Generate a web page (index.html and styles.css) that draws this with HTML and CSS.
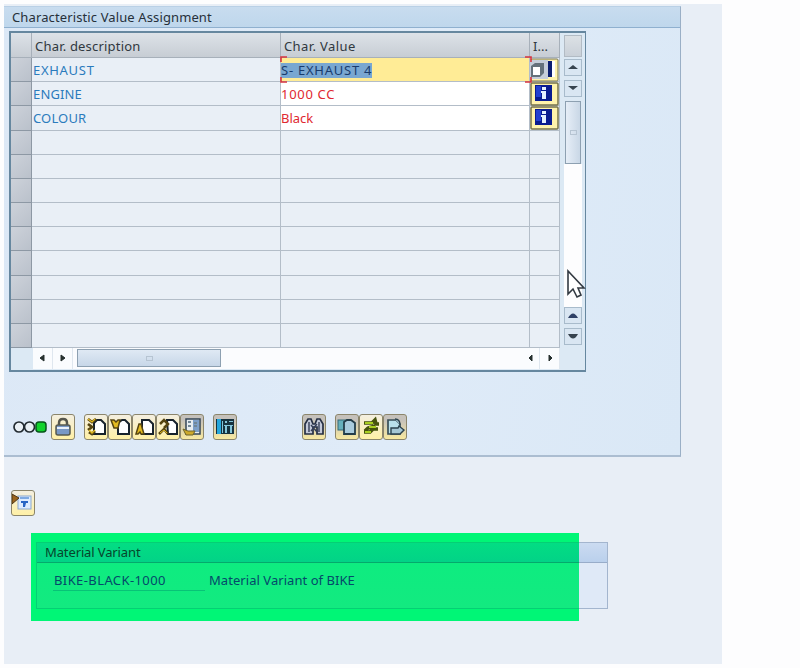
FILE: index.html
```html
<!DOCTYPE html>
<html lang="en">
<head>
    <meta charset="UTF-8">
    <title>Characteristic Value Assignment</title>
    <link rel="stylesheet" href="styles.css">
</head>
<body>

<div class="screen">
    <div class="panel">
        <div class="panel-title"><span class="t-title">Characteristic Value Assignment</span></div>

        <div class="table-box">
            <div class="table-main">
                <div class="grid">
                    <div class="row head">
                        <div class="sel"></div>
                        <div class="desc"><span class="t-desc">Char. description</span></div>
                        <div class="value"><span class="t-value">Char. Value</span></div>
                        <div class="info">I...</div>
                    </div>
                    <div class="rows">
                        <div class="row">
                            <div class="sel"></div>
                            <div class="desc"><span class="t-wide">EXHAUST</span></div>
                            <div class="value focused">
                                <span class="marked">S- EXHAUST 4</span>
                                <svg class="corners" width="252" height="27" viewBox="0 0 252 27"><path d="M1 6V1H7M245 1H251V6M1 21V26H7M245 26H251V21" fill="none" stroke="#d8353c" stroke-width="1.6"/></svg>
                            </div>
                            <div class="info">
                                <svg width="29" height="24" viewBox="0 0 29 24"><rect x="1" y="1" width="27" height="22" rx="1" fill="#fff3ac" stroke="#777348"/><rect x="0" y="2" width="18" height="19" fill="#c5cdd9"/><path d="M1 8l4-3h9v10l-4 4H1z" fill="#64717b"/><rect x="3" y="9" width="7" height="8" fill="#fff"/><path d="M18 3h4v16h-4z" fill="#0b1e70"/><path d="M22 3h3v16h-3z" fill="#fff"/></svg>
                            </div>
                        </div>
                        <div class="row">
                            <div class="sel"></div>
                            <div class="desc"><span class="t-engine">ENGINE</span></div>
                            <div class="value filled"><span class="t-wide">1000 CC</span></div>
                            <div class="info">
                                <svg width="29" height="24" viewBox="0 0 29 24"><rect x="1" y="1" width="27" height="22" rx="1" fill="#fff3ac" stroke="#777348" stroke-width="1.5"/><rect x="5" y="3" width="17" height="16" fill="#0a1c90"/><path d="M6 4h5v11H6z" fill="#2340d0"/><path d="M12 5h4v3h-4zM11 9h5v8h-4v-6h-1z" fill="#e6f1ff"/></svg>
                            </div>
                        </div>
                        <div class="row">
                            <div class="sel"></div>
                            <div class="desc"><span class="t-engine">COLOUR</span></div>
                            <div class="value filled">Black</div>
                            <div class="info">
                                <svg width="29" height="24" viewBox="0 0 29 24"><rect x="1" y="1" width="27" height="22" rx="1" fill="#fff3ac" stroke="#777348" stroke-width="1.5"/><rect x="5" y="3" width="17" height="16" fill="#0a1c90"/><path d="M6 4h5v11H6z" fill="#2340d0"/><path d="M12 5h4v3h-4zM11 9h5v8h-4v-6h-1z" fill="#e6f1ff"/></svg>
                            </div>
                        </div>
                        <!-- empty rows -->
                        <div class="row"><div class="sel"></div><div class="desc"></div><div class="value"></div><div class="info"></div></div>
                        <div class="row"><div class="sel"></div><div class="desc"></div><div class="value"></div><div class="info"></div></div>
                        <div class="row"><div class="sel"></div><div class="desc"></div><div class="value"></div><div class="info"></div></div>
                        <div class="row"><div class="sel"></div><div class="desc"></div><div class="value"></div><div class="info"></div></div>
                        <div class="row"><div class="sel"></div><div class="desc"></div><div class="value"></div><div class="info"></div></div>
                        <div class="row"><div class="sel"></div><div class="desc"></div><div class="value"></div><div class="info"></div></div>
                        <div class="row"><div class="sel"></div><div class="desc"></div><div class="value"></div><div class="info"></div></div>
                        <div class="row"><div class="sel"></div><div class="desc"></div><div class="value"></div><div class="info"></div></div>
                        <div class="row"><div class="sel"></div><div class="desc"></div><div class="value"></div><div class="info"></div></div>
                    </div>
                </div>

                <div class="vscroll">
                    <div class="config"></div>
                    <div class="vbtn"><svg width="16" height="16" viewBox="0 0 16 16"><path d="M3 9l5-4 5 4z" fill="#36434e"/></svg></div>
                    <div class="vbtn"><svg width="16" height="16" viewBox="0 0 16 16"><path d="M3 5l5 4 5-4z" fill="#36434e"/></svg></div>
                    <div class="vthumb"><i></i></div>
                    <div class="vtrack"></div>
                    <div class="vbtn"><svg width="16" height="16" viewBox="0 0 16 16"><path d="M3 10q5-9 10 0z" fill="#2e4065"/></svg></div>
                    <div class="vbtn last"><svg width="16" height="16" viewBox="0 0 16 16"><path d="M3 5q5 9 10 0z" fill="#36434e"/></svg></div>
                </div>
            </div>

            <div class="hscroll">
                <div class="hbtn"><svg width="19" height="20" viewBox="0 0 19 20"><path d="M11 7l-4 3 4 3z" fill="#26302f" stroke="#26302f"/></svg></div>
                <div class="hbtn"><svg width="19" height="20" viewBox="0 0 19 20"><path d="M8 7l4 3-4 3z" fill="#26302f" stroke="#26302f"/></svg></div>
                <div class="htrack"><div class="hthumb"><i></i></div></div>
                <div class="hbtn"><svg width="19" height="20" viewBox="0 0 19 20"><path d="M12 7l-3 3 3 3z" fill="#26302f" stroke="#26302f"/></svg></div>
                <div class="hbtn"><svg width="19" height="20" viewBox="0 0 19 20"><path d="M9 7l3 3-3 3z" fill="#26302f" stroke="#26302f"/></svg></div>
            </div>
        </div>

        <div class="toolbar">
            <svg class="lights" width="34" height="14" viewBox="0 0 34 14"><circle cx="6" cy="7" r="5" fill="#eaf0f5" stroke="#222a30" stroke-width="1.7"/><circle cx="16.5" cy="7" r="5" fill="#eaf0f5" stroke="#222a30" stroke-width="1.7"/><rect x="23" y="2" width="10" height="10" rx="3" fill="#11d22c" stroke="#07551b" stroke-width="1.5"/></svg>
            <!-- lock -->
            <button class="tool"><svg width="22" height="24" viewBox="0 0 22 24"><path d="M7 11V8q0-4 4-4t4 4v3" fill="none" stroke="#56564c" stroke-width="2.5"/><rect x="4" y="10" width="14" height="10" rx="2" fill="#7898c6" stroke="#555950" stroke-width="1.5"/><path d="M5 13h12" stroke="#e8f0fa" stroke-width="2"/></svg></button>
            <span class="gap-s"></span>
            <!-- insert, change and sort rows -->
            <button class="tool"><svg width="22" height="24" viewBox="0 0 22 24"><path d="M9 8l3-3h4l4 4v10H9z" fill="#fff" stroke="#17222c" stroke-width="2"/><path d="M3 4l4 3 4-3M3 9l4 3-4 3M4 17l3 2 3-3" fill="none" stroke="#554410" stroke-width="2.8"/><path d="M3 4l4 3 3-3M4 15l3 3 3-3" fill="none" stroke="#e2ba20" stroke-width="1.3"/></svg></button>
            <button class="tool"><svg width="22" height="24" viewBox="0 0 22 24"><path d="M9 8l4-3h3l4 4v10H9z" fill="#fff" stroke="#17222c" stroke-width="2"/><path d="M2 5h3l2 2 2-2h2l-2 8H5z" fill="#e2ba20" stroke="#554410" stroke-width="1.5"/></svg></button>
            <button class="tool"><svg width="22" height="24" viewBox="0 0 22 24"><path d="M9 5h7l4 4v10H9z" fill="#fff" stroke="#17222c" stroke-width="2"/><path d="M6 9h2l3 10H8l-1-2-2 2H3z" fill="#e2ba20" stroke="#554410" stroke-width="1.5"/></svg></button>
            <button class="tool"><svg width="22" height="24" viewBox="0 0 22 24"><path d="M10 5h6l4 4v10h-9z" fill="#fff" stroke="#17222c" stroke-width="2"/><path d="M3 9l4-4 4 4-4 4M2 19l5-5 4 5" fill="none" stroke="#554410" stroke-width="2.5"/><path d="M3 18l4-3 3 3" fill="none" stroke="#e2ba20"/></svg></button>
            <button class="tool pressed"><svg width="22" height="24" viewBox="0 0 22 24"><rect x="5" y="4" width="14" height="15" fill="#e7edf0" stroke="#344657" stroke-width="1.5"/><path d="M12 5h6v12h-6z" fill="#7c9fc8"/><path d="M7 7h3M7 11h3M13 8h3M13 11h3" stroke="#718797" stroke-width="2"/><path d="M2 14l5 2h7l-2 4H5z" fill="#cda92b" stroke="#6c632b"/></svg></button>
            <span class="gap-s"></span>
            <!-- column view -->
            <button class="tool pressed"><svg width="22" height="24" viewBox="0 0 22 24"><rect x="2" y="4" width="18" height="15" fill="#16323f"/><path d="M3 4h4v15H3z" fill="#25a7dc"/><path d="M8 6h1v12H8zM11 10h2v8h-2zM16 10h2v8h-2zM11 6h2v2h-2zM15 6h4v1h-4zM10 10h9v1h-9z" fill="#84c6db"/></svg></button>
            <span class="gap-l"></span>
            <!-- find -->
            <button class="tool pressed"><svg width="22" height="24" viewBox="0 0 22 24"><path d="M2 19V9l3-5h3l2 5h2l2-5h3l3 5v10h-6v-7h-4v7z" fill="#c4cad9" stroke="#263044" stroke-width="1.7"/><path d="M6 7v10M16 7v10M8 10l6 7M14 9l-6 7" stroke="#343e56" stroke-width="1.4"/></svg></button>
            <span class="gap-s"></span>
            <!-- copy, exchange, export -->
            <button class="tool pressed"><svg width="22" height="24" viewBox="0 0 22 24"><rect x="2" y="5" width="9" height="10" fill="#65b0bc" stroke="#376b78"/><path d="M8 7l3-2h4l4 3v11H8z" fill="#a9cbdd" stroke="#233d4a" stroke-width="1.8"/></svg></button>
            <button class="tool"><svg width="22" height="24" viewBox="0 0 22 24"><path d="M4 8h8l3-3 1 4h3M15 11l-7 2-3 3M4 17h6l3-3h5" fill="none" stroke="#46520d" stroke-width="3.6"/><path d="M5 8h8M5 17h6M9 12h7" stroke="#a9cf20" stroke-width="2"/></svg></button>
            <button class="tool pressed"><svg width="22" height="24" viewBox="0 0 22 24"><path d="M4 5h8l4 4v10H4z" fill="#b9e0eb" stroke="#384e58" stroke-width="1.7"/><path d="M11 4q5 0 5 6M7 13h7l1-2 5 4-4 4H7z" fill="#a5c7d5" stroke="#2b424d" stroke-width="1.4"/></svg></button>
        </div>
    </div>

    <button class="tool single"><svg width="22" height="24" viewBox="0 0 22 24"><rect x="6" y="5" width="13" height="13" fill="#dcebff" stroke="#8aa8cf"/><path d="M8 7h9" stroke="#5f93d8" stroke-width="1.5"/><path d="M9 10h7v2h-2l-1 4h-2v-4H9z" fill="#2765c4"/><path d="M0 3l7 4-7 6z" fill="#9b641c" stroke="#4c3518"/></svg></button>

    <div class="variant">
        <div class="highlight">
            <div class="variant-box">
                <div class="variant-title"><span class="t-mv">Material Variant</span></div>
                <div class="variant-row">
                    <div class="variant-id"><span class="t-id">BIKE-BLACK-1000</span></div>
                    <div><span class="t-name">Material Variant of BIKE</span></div>
                </div>
            </div>
        </div>
        <div class="variant-end"><div class="variant-end-title"></div></div>
    </div>

    <svg class="pointer" width="20" height="30" viewBox="0 0 20 30"><path d="M2 2v23l5-5 4 8 4-2-3-7h6z" fill="#fff" stroke="#333a42" stroke-width="1.6"/></svg>
</div>

</body>
</html>
```

FILE: styles.css
```css
* {
    box-sizing: border-box;
}

body {
    margin: 0;
    padding: 4px;
    background-color: #fdfdfe;
    font-family: "Noto Sans", "DejaVu Sans", sans-serif;
    font-size: 13px;
    line-height: 18px;
    color: #26303a;
}

svg {
    display: block;
    flex: none;
}

.screen {
    position: relative;
    width: 718px;
    height: 660px;
    padding-top: 2px;
    background-color: #e8eef6;
}

/* Upper panel */
.panel {
    width: 677px;
    height: 451px;
    background: linear-gradient(100deg, #dce8f6, #dfebf8 60%, #dae8f6);
    border: solid #9aafc6;
    border-width: 1px 1px 2px 0;
    border-top-color: #b9d0e6;
    border-bottom-color: #abbdd1;
}

.panel-title {
    height: 21px;
    padding-left: 8px;
    line-height: 21px;
    background: linear-gradient(#c8dcef, #bfd7ec);
    border-bottom: 1px solid #8fb0cf;
}

.table-box {
    width: 577px;
    height: 341px;
    margin: 3px 0 0 5px;
    border: 2px solid #66879f;
    border-right-width: 1px;
    background-color: #dce9f4;
}

.table-main {
    display: flex;
    height: 315px;
}

.grid {
    width: 549px;
}

.rows {
    display: flex;
    flex-direction: column;
    height: 290px;
}

.row {
    display: flex;
    flex: 1 1 0;
    min-height: 0;
}

.row > div {
    display: flex;
    align-items: center;
    border: solid #b3bdc8;
    border-width: 0 1px 1px 0;
    background-color: #e9eff6;
}

.row > .sel {
    width: 21px;
    background: linear-gradient(135deg, #cdd2da, #bac1cb);
    border-color: #8d98a4;
}

.row > .desc {
    width: 249px;
    padding: 1px 0 0 1px;
    color: #2b7bbd;
}

.row > .value {
    position: relative;
    width: 249px;
    padding-top: 1px;
    color: #e02830;
}

.row > .info {
    width: 30px;
}

.row > .filled {
    background-color: #fff;
}

.row > .focused {
    padding-top: 2px;
    background-color: #ffec96;
}

.row.head {
    flex: none;
    height: 25px;
}

.row.head > div {
    padding-top: 1px;
    color: #303840;
    background: linear-gradient(#dde2e8, #c7cdd4);
    border-color: #a7b0ba;
}

.row.head > .desc,
.row.head > .value,
.row.head > .info {
    padding-left: 3px;
}

.marked {
    height: 15px;
    line-height: 15px;
    letter-spacing: 0.75px;
    color: #183b6c;
    background-color: #79a7d1;
}

.corners {
    position: absolute;
    left: -1px;
    top: -2px;
    z-index: 1;
}

/* Text widths */
.t-title {
    letter-spacing: 0.12px;
}

.t-desc {
    letter-spacing: 0.2px;
}

.t-value,
.t-id {
    letter-spacing: 0.4px;
}

.t-wide {
    letter-spacing: 0.7px;
}

.t-engine {
    letter-spacing: 0.15px;
}

.t-mv {
    letter-spacing: -0.12px;
}

.t-name {
    letter-spacing: 0.05px;
}

/* Vertical scrollbar */
.vscroll {
    display: flex;
    flex-direction: column;
    align-items: center;
    width: 25px;
    padding: 2px 2px 0 3px;
}

.config {
    width: 18px;
    height: 22px;
    margin-bottom: 2px;
    border: 1px solid #b2bbc4;
    background: linear-gradient(#dce1e5, #c9d0d8);
}

.vbtn {
    width: 18px;
    height: 17px;
    margin-bottom: 4px;
    border: 1px solid #a8bbcb;
    background-color: #d9e6f2;
}

.vthumb,
.hthumb {
    display: flex;
    align-items: center;
    justify-content: center;
    border: 1px solid #8da0b1;
}

.vthumb {
    width: 16px;
    height: 63px;
    background: linear-gradient(90deg, #e6eef7, #c9d7e6);
}

.vtrack {
    width: 18px;
    flex: 1;
    background-color: #fdfdfe;
}

.vthumb i,
.hthumb i {
    width: 7px;
    height: 5px;
    border: 1px solid #b6c4d2;
}

.last {
    margin-bottom: 3px;
}

/* Horizontal scrollbar */
.hscroll {
    display: flex;
    height: 21px;
    padding-left: 22px;
}

.hbtn {
    width: 20px;
    border-right: 1px solid #dfe7ef;
    background-color: #fafcfe;
}

.htrack {
    width: 447px;
    padding: 1px 0 0 4px;
    background-color: #fbfcfe;
}

.hthumb {
    width: 144px;
    height: 18px;
    background: linear-gradient(#dfe9f4, #c7d7e8);
}

/* Toolbar */
.toolbar {
    display: flex;
    align-items: center;
    height: 26px;
    margin-top: 42px;
    padding-left: 9px;
}

.lights {
    margin-right: 4px;
}

.tool {
    flex: none;
    width: 24px;
    height: 26px;
    padding: 0;
    border: 1px solid #8b856b;
    border-radius: 3px;
    background: linear-gradient(#f4efe0, #fff0a6);
}

.tool.pressed {
    background: linear-gradient(#c5c1bb 20%, #f8e9a0);
}

.gap-s {
    width: 9px;
}

.gap-l {
    width: 65px;
}

.single {
    display: block;
    margin: 33px 0 0 7px;
}

/* Material variant */
.variant {
    display: flex;
    margin: 17px 0 0 27px;
}

.highlight {
    width: 548px;
    height: 88px;
    padding: 9px 0 0 5px;
    background-color: #00f676;
}

.variant-box {
    height: 67px;
    border: 1px solid #05cf75;
    border-right: 0;
    background: linear-gradient(#0ced80, #13ea80);
}

.variant-title {
    height: 20px;
    padding-left: 8px;
    line-height: 19px;
    color: #06452c;
    background: linear-gradient(#03dd83, #02d387);
    border-bottom: 1px solid #05aa6c;
}

.variant-row {
    display: flex;
    padding: 8px 0 0 16px;
    line-height: 19px;
    color: #05496a;
}

.variant-id {
    width: 152px;
    height: 20px;
    margin-right: 4px;
    padding-left: 1px;
    border-bottom: 1px solid #08c377;
}

.variant-end {
    width: 29px;
    height: 67px;
    margin-top: 9px;
    border: 1px solid #a3b5ce;
    border-left: 0;
    background-color: #dfe9f7;
}

.variant-end-title {
    height: 20px;
    background: linear-gradient(#cbdbf1, #bad0ec);
    border-bottom: 1px solid #98acc9;
}

/* Mouse pointer over the table */
.pointer {
    position: absolute;
    left: 562px;
    top: 265px;
}
```
